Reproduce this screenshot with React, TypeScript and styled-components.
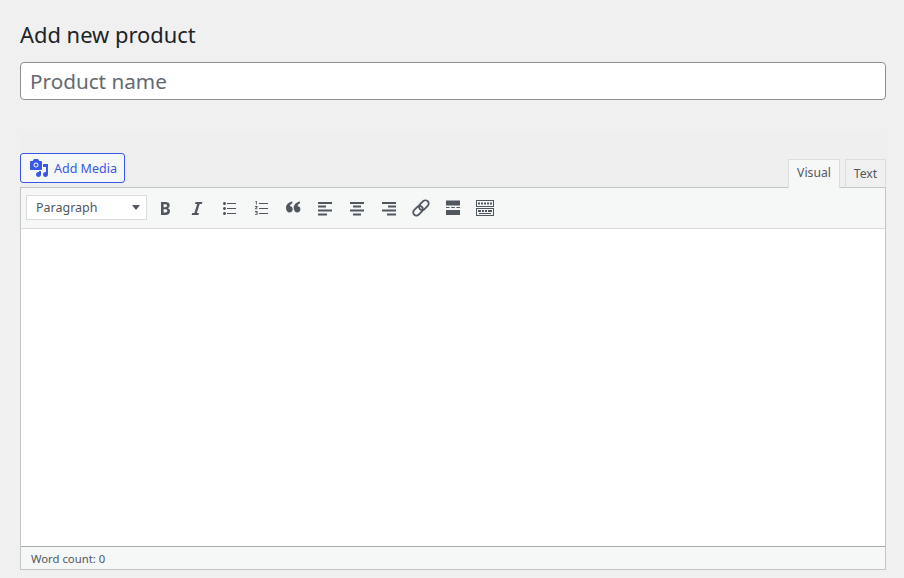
import { createGlobalStyle } from "styled-components"
import styled from "styled-components"

const GlobalStyle = createGlobalStyle`
  html, body {
    margin: 0;
    height: 100%;
    background: #f0f0f1;
    overflow: hidden;
  }
  body {
    font-family: "Noto Sans", "Open Sans", Arial, sans-serif;
    color: #3c434a;
  }
`

const Page = styled.div`
  padding: 0 18px 0 20px;
`

const Heading = styled.h1`
  margin: 0;
  padding-top: 20px;
  height: 62px;
  box-sizing: border-box;
  font-size: 21.9px;
  line-height: 30px;
  font-weight: 400;
  color: #1d2327;
`

const TitleInput = styled.input`
  display: block;
  width: 100%;
  height: 38px;
  box-sizing: border-box;
  padding: 0 9px;
  font-family: inherit;
  font-size: 20.7px;
  color: #2c3338;
  background: #fff;
  border: 1px solid #8c8f94;
  border-radius: 4px;
  outline: none;

  &::placeholder {
    color: #646970;
    opacity: 1;
  }
`

const EditorWrap = styled.div`
  margin-top: 32px;
  padding-top: 21px;
  background: #efefef;
`

const EditorTools = styled.div`
  display: flex;
  justify-content: space-between;
  align-items: flex-end;
  height: 34px;
`

const MediaButton = styled.button`
  display: flex;
  align-items: center;
  gap: 5px;
  align-self: flex-start;
  width: 105px;
  height: 30px;
  box-sizing: border-box;
  padding: 0 0 0 8px;
  font-family: inherit;
  font-size: 12.5px;
  color: #3858e9;
  background: #f6f7f7;
  border: 1px solid #3858e9;
  border-radius: 3px;

  svg {
    display: block;
    flex: none;
    width: 20px;
    height: 20px;
    fill: #3858e9;
  }
`

const Tabs = styled.div`
  display: flex;
  gap: 5px;
  margin-bottom: -1px;
  position: relative;
`

const Tab = styled.button<{ $active?: boolean }>`
  height: 29px;
  box-sizing: border-box;
  padding: 0 0 ${(p) => (p.$active ? 3 : 1)}px;
  width: ${(p) => (p.$active ? 52 : 41)}px;
  font-family: inherit;
  font-size: 12.2px;
  color: #50575e;
  background: ${(p) => (p.$active ? "#f6f7f7" : "#f0f0f1")};
  border: 1px solid #dcdcde;
  border-bottom: ${(p) => (p.$active ? "none" : "1px solid #c3c4c7")};
`

const EditorBox = styled.div`
  border: 1px solid #c3c4c7;
`

const Toolbar = styled.div`
  display: flex;
  align-items: center;
  height: 41px;
  box-sizing: border-box;
  padding: 0 0 1px 5px;
  background: #f6f7f7;
  border-bottom: 1px solid #dcdcde;
`

const FormatSelect = styled.div`
  display: flex;
  align-items: center;
  justify-content: space-between;
  width: 121px;
  height: 25px;
  box-sizing: border-box;
  margin-right: 2px;
  padding: 0 6px 0 9px;
  font-size: 12.5px;
  color: #50575e;
  background: #fff;
  border: 1px solid #dcdcde;
`

const Caret = styled.span`
  width: 0;
  height: 0;
  border-left: 4px solid transparent;
  border-right: 4px solid transparent;
  border-top: 5px solid #50575e;
`

const ToolButton = styled.span`
  display: flex;
  align-items: center;
  justify-content: center;
  width: 32px;
  height: 28px;

  svg {
    display: block;
    width: 20px;
    height: 20px;
    fill: #50575e;
  }
`

const EditArea = styled.div`
  height: 317px;
  background: #fff;
`

const StatusBar = styled.div`
  height: 23px;
  box-sizing: border-box;
  padding-left: 10px;
  font-size: 11.3px;
  line-height: 23px;
  color: #50575e;
  background: #f6f7f7;
  border-top: 1px solid #a7aaad;
`

const MediaIcon = () => (
  <svg viewBox="0 0 20 20">
    <path d="M13 11V4c0-.55-.45-1-1-1h-1.670L9 1H5L3.670 3H2c-.55 0-1 .45-1 1v7c0 .55.45 1 1 1h10c.55 0 1-.45 1-1zM7 4.500c1.380 0 2.500 1.120 2.500 2.500S8.380 9.500 7 9.500 4.500 8.380 4.500 7 5.620 4.500 7 4.500zM14 6h5v10.500c0 1.380-1.120 2.500-2.500 2.500S14 17.880 14 16.500s1.120-2.500 2.500-2.500c.17 0 .34.020.5.050V9h-3V6zm-4 8.050V13h2v3.500c0 1.380-1.120 2.500-2.500 2.500S7 17.880 7 16.500 8.120 14 9.500 14c.17 0 .34.020.5.050z" fillRule="evenodd" />
    <circle cx="7" cy="7" r="1.500" />
  </svg>
)

const icons: Record<string, React.ReactNode> = {
  bold: <path fillRule="evenodd" d="M6 4v13h4.540c1.370 0 2.460-.33 3.260-1 .8-.66 1.200-1.580 1.200-2.770 0-.84-.17-1.510-.51-2.010s-.9-.85-1.670-1.030v-.09c.57-.1 1.020-.4 1.360-.9s.51-1.130.51-1.910c0-1.140-.39-1.980-1.170-2.500C12.750 4.260 11.500 4 9.780 4H6zm2.570 5.150V6.260h1.360c.73 0 1.270.11 1.610.32.34.22.51.58.51 1.070 0 .54-.16.92-.47 1.150s-.82.35-1.510.35h-1.500zm0 2.190h1.600c1.440 0 2.160.5 2.160 1.510 0 .56-.17.98-.5 1.250s-.83.41-1.480.41H8.570v-3.170z" />,
  italic: <path d="M14.780 6h-2.130l-2.800 9h2.120l-.62 2H4.600l.62-2h2.140l2.800-9H8.030l.62-2h6.750z" />,
  ul: <path d="M5.500 7C4.670 7 4 6.330 4 5.500 4 4.680 4.670 4 5.500 4 6.320 4 7 4.680 7 5.500 7 6.330 6.320 7 5.500 7zM8 5h9v1H8V5zm-2.500 7c-.83 0-1.500-.67-1.500-1.500C4 9.680 4.670 9 5.500 9c.82 0 1.500.68 1.500 1.500 0 .83-.68 1.500-1.500 1.500zM8 10h9v1H8v-1zm-2.500 7c-.83 0-1.500-.67-1.500-1.500 0-.82.67-1.500 1.500-1.500.82 0 1.500.68 1.500 1.500 0 .83-.68 1.500-1.500 1.500zM8 15h9v1H8v-1z" />,
  ol: <path d="M8 5h9v1H8zm0 5h9v1H8zm0 5h9v1H8zM4.600 3h1.200v3.600H4.900V4l-.6.3zM4 8h2.600v1L5.200 10.400h1.400v.9H4v-.8l1.500-1.600H4zm0 5h2.600v3.800H4v-.8h1.700v-.7H4.600v-.7h1.100v-.7H4z" />,
  quote: <path d="M9.300 3.500v1.700C7.700 6 7 7 6.900 8.200c1.700-.1 2.800 1.200 2.800 3 0 1.900-1.300 3.300-3 3.300C4.500 14.500 3 12.700 3 10c0-3.300 2.300-5.700 6.300-6.500zm7.700 0v1.700c-1.600.8-2.300 1.800-2.400 3 1.700-.1 2.800 1.200 2.800 3 0 1.900-1.300 3.300-3 3.300-2.200 0-3.700-1.800-3.700-4.500 0-3.300 2.300-5.700 6.300-6.500z" />,
  alignLeft: <path d="M3 4h14v2H3zm0 3.500h8v2H3zm0 4h14v2H3zm0 4h9v2H3z" />,
  alignCenter: <path d="M3 4h14v2H3zm3 3.500h8v2H6zm-3 4h14v2H3zm3 4h8v2H6z" />,
  alignRight: <path d="M3 4h14v2H3zm6 3.500h8v2H9zm-6 4h14v2H3zm5 4h9v2H8z" />,
  link: (
    <g fill="none" stroke="#50575e" strokeWidth="1.800">
      <rect x="9.500" y="1.800" width="6.500" height="11" rx="3.250" transform="rotate(45 13 7.300)" />
      <rect x="3.800" y="7.200" width="6.500" height="11" rx="3.250" transform="rotate(45 7 12.700)" />
    </g>
  ),
  more: <path d="M3 2.500h14v5H3zm0 9.500h14v5H3zM3 9h3.500v1H3zm5.250 0h3.500v1h-3.500zm5.250 0H17v1h-3.500z" />,
  sink: (
    <path fillRule="evenodd" d="M1 2h18v7H1zm1 1v5h16V3zM3 4.500h2v2H3zm3 0h2v2H6zm3 0h2v2H9zm3 0h2v2h-2zm3 0h2v2h-2zM1 10h18v8H1zm1 1v6h16v-6zm1 1h3v2H3zm4 0h2v2H7zm3 0h2v2h-2zm3 0h4v2h-4zm-9 3h12v1H4z" />
  ),
}

const toolbarIcons = ["bold", "italic", "ul", "ol", "quote", "alignLeft", "alignCenter", "alignRight", "link", "more", "sink"]

export default function App() {
  return (
    <Page>
      <GlobalStyle />
      <Heading>Add new product</Heading>
      <TitleInput placeholder="Product name" />
      <EditorWrap>
        <EditorTools>
          <MediaButton>
            <MediaIcon />
            Add Media
          </MediaButton>
          <Tabs>
            <Tab $active>Visual</Tab>
            <Tab>Text</Tab>
          </Tabs>
        </EditorTools>
        <EditorBox>
          <Toolbar>
            <FormatSelect>
              Paragraph
              <Caret />
            </FormatSelect>
            {toolbarIcons.map((name) => (
              <ToolButton key={name}>
                <svg viewBox="0 0 20 20">{icons[name]}</svg>
              </ToolButton>
            ))}
          </Toolbar>
          <EditArea />
          <StatusBar>Word count: 0</StatusBar>
        </EditorBox>
      </EditorWrap>
    </Page>
  )
}
